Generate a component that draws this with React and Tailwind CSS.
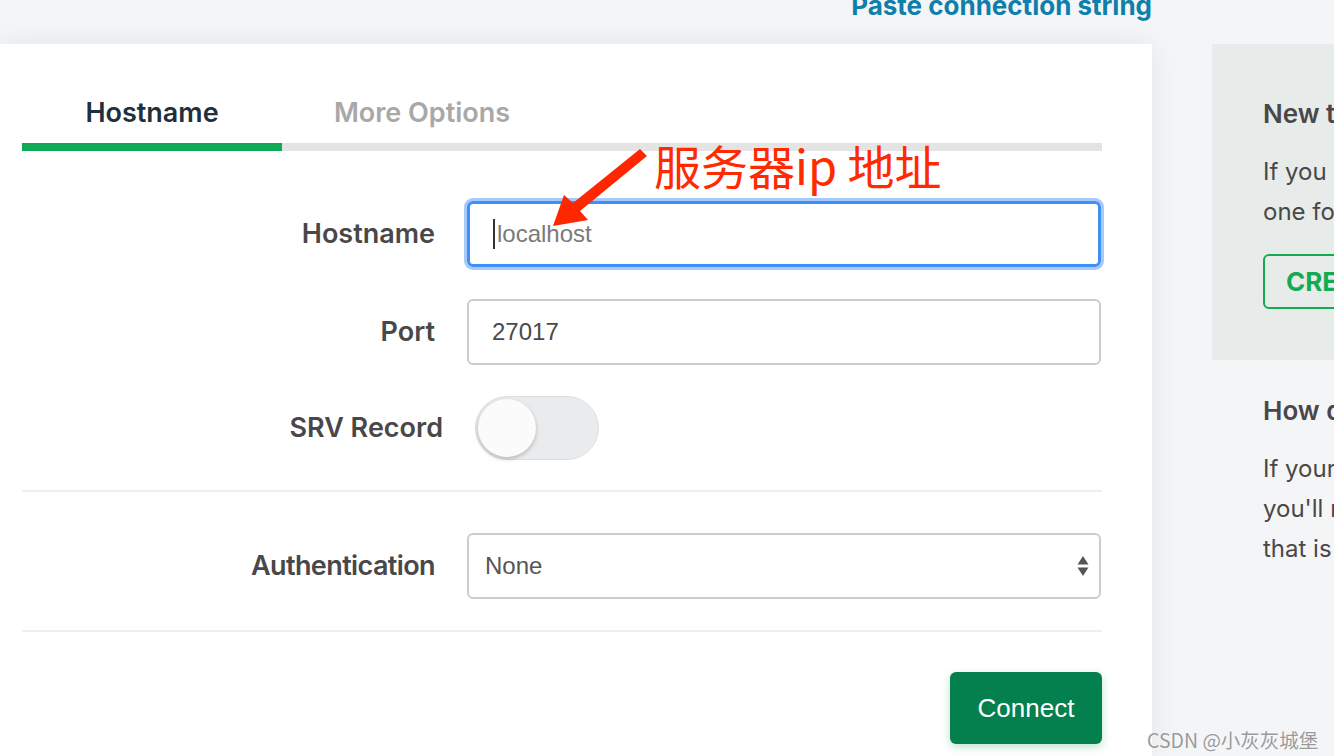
import { useState } from 'react';

const sans = { fontFamily: 'Inter, "Noto Sans", sans-serif' };
const helv = { fontFamily: '"Liberation Sans", Arial, sans-serif' };

const Label = ({ children, wide, tight }) => (
    <div className={`${wide ? 'w-[421px]' : 'w-[413px]'} ${tight ? 'tracking-[-0.6px]' : ''} shrink-0 text-right text-[27px] leading-[32px] font-semibold text-[#494747]`}>
        {children}
    </div>
);

const Row = ({ label, wide, tight, className = '', children }) => (
    <div className={`flex items-center gap-[32px] ${className}`}>
        <Label wide={wide} tight={tight}>{label}</Label>
        {children}
    </div>
);

const SelectArrows = () => (
    <svg width="12" height="22" viewBox="0 0 12 22" className="shrink-0">
        <path d="M6 1 L11.5 9.5 L0.5 9.5 Z" fill="#555" />
        <path d="M6 21 L11.5 12.5 L0.5 12.5 Z" fill="#555" />
    </svg>
);

const App = () => {
    const [tab, setTab] = useState('hostname');
    const [srv, setSrv] = useState(false);

    const tabClass = (id) =>
        `pb-[16px] border-b-[8px] text-[27px] font-semibold leading-[28px] ${tab === id ? 'border-[#0fa958] text-[#1f2f3b]' : 'border-[#e4e4e4] text-[#a8a8a8]'}`;

    return (
        <div className="relative w-full h-[756px] overflow-hidden bg-[#f4f5f7]" style={sans}>
            {/* Top link strip */}
            <div className="h-[44px] w-[1152px] flex justify-end items-start">
                <a className="-mt-[9px] text-[26px] font-bold leading-[30px] text-[#0e7fab] cursor-pointer">Paste connection string</a>
            </div>

            <div className="flex items-start gap-[60px]">
                {/* Main card */}
                <div className="w-[1152px] shrink-0 h-[712px] bg-white pl-[22px] pr-[50px] shadow-[0_0_28px_rgba(0,0,0,0.07)]">
                    {/* Tabs */}
                    <div className="flex pt-[55px]">
                        <button onClick={() => setTab('hostname')} className={`w-[260px] ${tabClass('hostname')}`}>
                            Hostname
                        </button>
                        <button onClick={() => setTab('more')} className={`w-[280px] ${tabClass('more')}`}>
                            More Options
                        </button>
                        <div className="flex-1 border-b-[8px] border-[#e4e4e4]" />
                    </div>

                    {/* Hostname */}
                    <Row label="Hostname" className="mt-[50px]">
                        <div className="w-[634px] h-[66px] flex items-center pl-[23px] rounded-[6px] border-[3px] border-[#3f8ff8] shadow-[0_0_0_3px_#a8cafb]" style={helv}>
                            <span className="w-[2px] h-[30px] bg-[#333] mr-[2px]" />
                            <span className="text-[24px] text-[#7a7a7a]">localhost</span>
                        </div>
                    </Row>

                    {/* Port */}
                    <Row label="Port" className="mt-[32px]">
                        <div className="w-[634px] h-[66px] flex items-center pl-[23px] rounded-[6px] border-2 border-[#cccccc] text-[24px] text-[#4a4a4a]" style={helv}>
                            27017
                        </div>
                    </Row>

                    {/* SRV Record */}
                    <Row label="SRV Record" wide className="mt-[31px]">
                        <button
                            onClick={() => setSrv(!srv)}
                            className={`w-[124px] h-[64px] rounded-full border border-[#dcdfe1] flex items-center px-[2px] ${srv ? 'bg-[#13aa52] justify-end' : 'bg-[#e9ebed] justify-start'}`}
                        >
                            <span className="w-[58px] h-[58px] rounded-full bg-[#fbfbfb] shadow-[0_2px_4px_rgba(0,0,0,0.22)]" />
                        </button>
                    </Row>

                    <div className="mt-[30px] h-[2px] bg-[#eeeeee]" />

                    {/* Authentication */}
                    <Row label="Authentication" tight className="mt-[41px]">
                        <div className="w-[634px] h-[66px] flex items-center justify-between pl-[16px] pr-[10px] rounded-[6px] border-2 border-[#cccccc] text-[24px] text-[#555]" style={helv}>
                            <span>None</span>
                            <SelectArrows />
                        </div>
                    </Row>

                    <div className="mt-[31px] h-[2px] bg-[#eeeeee]" />

                    <div className="mt-[40px] flex justify-end">
                        <button className="w-[152px] h-[72px] rounded-[6px] bg-[#03804d] text-white text-[26px] shadow-[0_3px_8px_rgba(19,170,82,0.3)]" style={helv}>
                            Connect
                        </button>
                    </div>
                </div>

                {/* Right help column */}
                <div className="w-[440px] shrink-0 text-[#494747]">
                    <div className="h-[316px] bg-[#e7ecea] pl-[51px] pt-[55px]">
                        <h3 className="text-[26px] font-semibold leading-[30px] whitespace-nowrap">New to Compass and don't have a cluster?</h3>
                        <p className="mt-[23px] text-[24px] leading-[40px] whitespace-nowrap">
                            If you don't already have a cluster, you can create
                            <br />
                            one for free using MongoDB Atlas.
                        </p>
                        <button className="mt-[22px] h-[55px] px-[21px] rounded-[6px] border-2 border-[#13aa52] text-[26px] font-bold text-[#13aa52] whitespace-nowrap">
                            CREATE FREE CLUSTER
                        </button>
                    </div>
                    <div className="pl-[51px]">
                        <h3 className="mt-[36px] text-[26px] font-semibold leading-[30px] whitespace-nowrap">How do I find my connection string?</h3>
                        <p className="mt-[23px] text-[24px] leading-[40px] whitespace-nowrap">
                            If your deployment is hosted on Atlas,
                            <br />
                            you'll need the connection string
                            <br />
                            that is shown in the Connect dialog.
                        </p>
                    </div>
                </div>
            </div>

            {/* Red annotation overlay */}
            <div className="absolute left-[654px] top-[135px] text-[47px] leading-[60px] text-[#ff2a00] whitespace-nowrap" style={{ fontFamily: '"Noto Sans CJK SC", sans-serif' }}>
                服务器ip 地址
            </div>
            <svg className="absolute left-[540px] top-[140px]" width="115" height="95" viewBox="0 0 115 95">
                <polygon points="13,86 24,55 33,63 100,9 107,16 40,71 48,80" fill="#ff2600" />
            </svg>

            {/* Watermark */}
            <div className="absolute left-[1147px] top-[725px] text-[19.5px] text-[#9a9a9a] whitespace-nowrap [text-shadow:0_0_2px_#fff]" style={{ fontFamily: '"Noto Sans CJK SC", sans-serif' }}>
                CSDN @小灰灰城堡
            </div>
        </div>
    );
};

export default App;
